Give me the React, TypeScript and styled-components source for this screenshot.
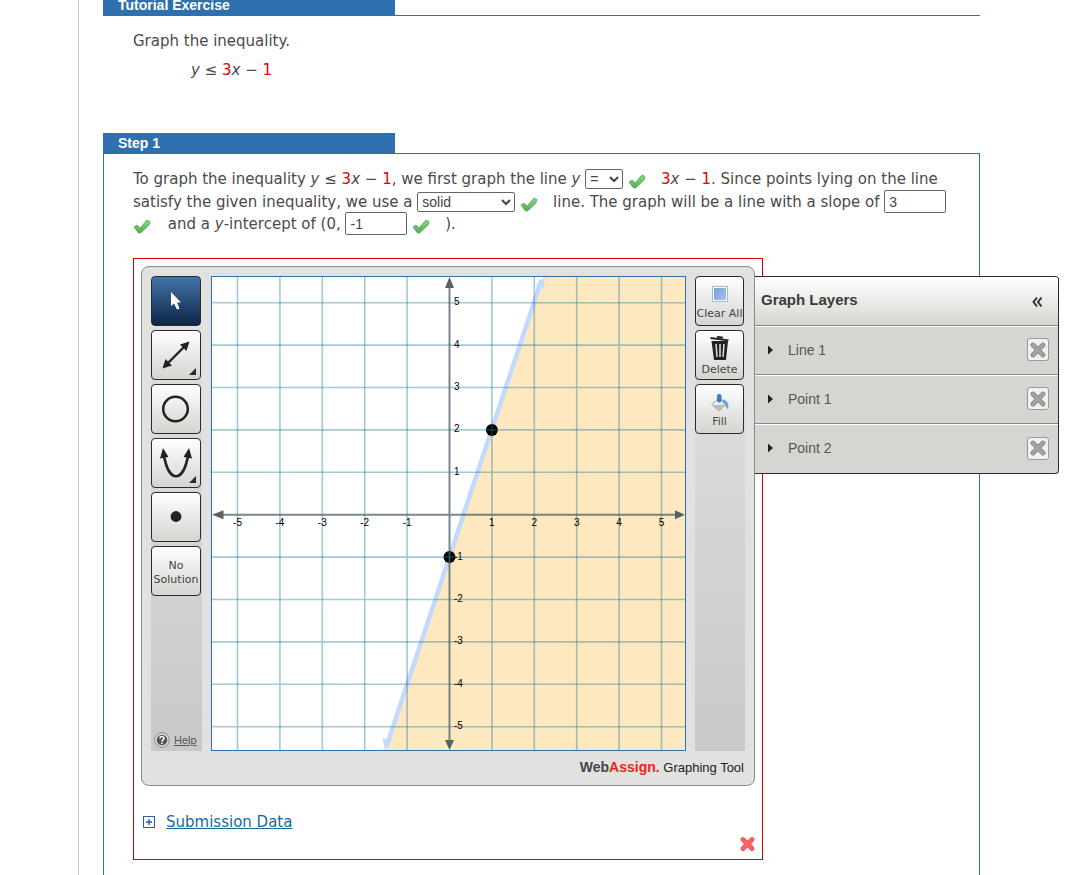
import React from "react";
import styled, { createGlobalStyle } from "styled-components";

const BLUE = "#2e6fad";

const GlobalStyle = createGlobalStyle`
  * { box-sizing: border-box; }
  body {
    margin: 0;
    background: #fff;
    color: #4a4a4a;
    font-family: "DejaVu Sans", Verdana, sans-serif;
    font-size: 15px;
    line-height: 22px;
    overflow-x: hidden;
  }
  p { margin: 0; }
`;

const Page = styled.main`
  display: flex;
  flex-direction: column;
  min-height: 100vh;
  margin-left: 78px;
  padding: 0 103px 0 24px;
  border-left: 1px solid #ccc;
`;

const Section = styled.section<{ $pull?: boolean; $grow?: boolean }>`
  margin-top: ${(p) => (p.$pull ? "-5px" : "0")};
  display: flex;
  flex-direction: column;
  flex-grow: ${(p) => (p.$grow ? 1 : 0)};
`;

const Tab = styled.h2`
  margin: 0;
  width: 33.33%;
  height: 20px;
  padding-left: 15px;
  background: ${BLUE};
  color: #fff;
  font: bold 14px/20px "Liberation Sans", Arial, sans-serif;
`;

const Prompt = styled.div`
  border-top: 1px solid ${BLUE};
  padding: 14px 30px 52px;
`;

const Formula = styled.p`
  margin-top: 7px;
  padding-left: 58px;
`;

const StepBody = styled.div`
  flex-grow: 1;
  border: 1px solid ${BLUE};
  border-width: 1px 1px 0;
  padding: 14px 29px 0;
`;

const Red = styled.span`
  color: #e00000;
`;

const Sentence = styled.p`
  white-space: nowrap;
  height: 22px;
`;

const Choice = styled.select<{ $width: number }>`
  width: ${(p) => p.$width}px;
  height: 20px;
  margin: 0 2px 2px 0;
  border: 1px solid #666;
  border-radius: 2px;
  background: #fff;
  color: #444;
  vertical-align: middle;
  font: 14px "Liberation Sans", Arial, sans-serif;
`;

const Answer = styled.input`
  width: 62px;
  height: 23px;
  margin: 0 2px 2px 0;
  padding: 0 4px;
  border: 1px solid #666;
  border-radius: 2px;
  color: #444;
  vertical-align: middle;
  font: 14px "Liberation Sans", Arial, sans-serif;
`;

const CheckIcon = styled.svg<{ $leading?: boolean }>`
  width: 18px;
  height: 16px;
  margin: 2px ${(p) => (p.$leading ? 12 : 10)}px 0 ${(p) => (p.$leading ? 0 : 3)}px;
  vertical-align: middle;
`;

const Check = ({ leading }: { leading?: boolean }) => (
  <CheckIcon $leading={leading} viewBox="0 0 18 16" role="img" aria-label="Correct">
    <defs>
      <linearGradient id="leaf" x1="0" y1="0" x2="0" y2="1">
        <stop offset="0" stopColor="#8fd78b" />
        <stop offset="1" stopColor="#4fae4d" />
      </linearGradient>
    </defs>
    <path d="M1 9 L4 7 L7 10 L14 2 L17 3.500 L16 7 L7.500 15 L5.500 15 Z" fill="url(#leaf)" stroke="#55a653" strokeWidth="0.800" strokeLinejoin="round" />
  </CheckIcon>
);

const ResultBox = styled.div`
  width: fit-content;
  margin-top: 24px;
  padding: 7px 7px 5px;
  border: 1px solid #d60000;
`;

const Tool = styled.div`
  position: relative;
  padding: 9px 9px 0;
  border: 1px solid #8a8a8a;
  border-radius: 8px;
  background: #e1e1df;
  font-family: "Liberation Sans", Arial, sans-serif;
`;

const Workspace = styled.div`
  display: flex;
  gap: 9px;
`;

const Strip = styled.div<{ $width: number }>`
  display: flex;
  flex-direction: column;
  gap: 4px;
  width: ${(p) => p.$width}px;
  padding-right: 1px;
  background: linear-gradient(#e2e2e2, #c9c9c9);
`;

const ToolButton = styled.button<{ $active?: boolean; $labelled?: boolean }>`
  position: relative;
  display: flex;
  flex-direction: column;
  align-items: center;
  justify-content: center;
  width: 100%;
  height: 50px;
  padding: ${(p) => (p.$labelled ? "3px 0 0" : "0")};
  border: 1px solid #2b2b2b;
  border-radius: 4px;
  background: ${(p) => (p.$active ? "linear-gradient(#4474ab, #0d2545)" : "linear-gradient(#fff, #d3d5d0)")};
  color: #444;
  font: 11px/14px "DejaVu Sans", Verdana, sans-serif;
`;

const Glyph = styled.svg`
  display: block;
  flex: none;
`;

const HelpLink = styled.a`
  display: flex;
  align-items: center;
  gap: 4px;
  margin-top: auto;
  padding: 0 0 3px 3px;
  color: #555;
  font-size: 11px;
  line-height: 16px;
`;

const Graph = styled.svg`
  display: block;
  width: 475px;
  height: 475px;
  border: 1px solid ${BLUE};
  background: #fff;
  font: 10px "Liberation Sans", Arial, sans-serif;
`;

const Brand = styled.div`
  padding: 5px 1px 6px;
  text-align: right;
  color: #222;
  font-size: 13px;
  line-height: 22px;
`;

const Web = styled.b`
  color: #3c4650;
  font-size: 14px;
`;

const Assign = styled.b`
  color: #fb1c1c;
  font-size: 14px;
`;

const Layers = styled.aside`
  position: absolute;
  left: calc(100% + 1px);
  top: 9px;
  width: 304px;
  border: 1px solid #2b2b2b;
  border-left: 0;
  border-radius: 0 4px 4px 0;
  background: #d5d6d1;
  overflow: hidden;
`;

const LayerRow = styled.div`
  display: flex;
  align-items: center;
  height: 49px;
  padding: 0 9px 2px 13px;
  border-top: 1px solid #fff;
  border-bottom: 1px solid #888;
  font-size: 14px;
  color: #555;
  &:last-child { border-bottom: 0; }
`;

const LayersHeader = styled(LayerRow)`
  padding: 0 15px 4px 6px;
  justify-content: space-between;
  background: linear-gradient(#fff, #d5d6d1);
  font-size: 15px;
  font-weight: bold;
  color: #3a3a3a;
`;

const LayerName = styled.span`
  flex: 1;
  margin-left: 15px;
`;

const PlainButton = styled.button`
  display: flex;
  padding: 4px 0 0;
  border: 0;
  background: none;
`;

const RemoveButton = styled.button`
  display: flex;
  align-items: center;
  justify-content: center;
  width: 22px;
  height: 23px;
  padding: 0;
  border: 1px solid #999;
  border-radius: 3px;
  background: #f1f1f1;
`;

const Submission = styled.div`
  display: flex;
  align-items: center;
  gap: 11px;
  margin-top: 25px;
  padding-left: 2px;
`;

const SubmissionLink = styled.a`
  color: #156a9f;
`;

const Verdict = styled.div`
  display: flex;
  justify-content: flex-end;
`;

const UNIT = 42.4;
const MID = 237.5;
const TICKS = [-5, -4, -3, -2, -1, 1, 2, 3, 4, 5];
const px = (x: number) => MID + x * UNIT;
const py = (y: number) => MID + 0.2 - y * UNIT;

const Plot = () => (
  <Graph viewBox="0 0 473 473" role="img" aria-label="Graph of the inequality">
    <path d={`M${px(2.21)} 0 H473 V473 H${px(-1.51)} Z`} fill="#fee8bf" />
    <path d={`M${px(2.17)} 3 L${px(-1.49)} 470`} stroke="#c3d9ff" strokeWidth="4.500" />
    <path d="M333 0 L331.500 12 L323 9 Z M173 473 L170.500 461 L179.500 464 Z" fill="#c3d9ff" />
    <circle cx={px(1)} cy={py(2)} r="6" fill="#000" />
    <circle cx={px(0)} cy={py(-1)} r="6" fill="#000" />
    <g stroke="#1c7896" strokeOpacity="0.400" strokeWidth="1.600">
      {TICKS.map((t) => (
        <path key={t} d={`M${px(t)} 0 V473 M0 ${py(t)} H473`} />
      ))}
    </g>
    <g stroke="#4a6068" strokeOpacity="0.750" strokeWidth="2">
      <path d={`M${MID} 6 V466 M6 ${py(0)} H466`} />
    </g>
    <path
      d={`M${MID} 0 l4.500 11 h-9 Z M${MID} 473 l4.500 -10 h-9 Z M0 ${py(0)} l11.500 -4.500 v9 Z M473 ${py(0)} l-10 -4.500 v9 Z`}
      fill="#566268"
    />
    <g fill="#000">
      {TICKS.map((t) => (
        <React.Fragment key={t}>
          <text x={px(t)} y="249" textAnchor="middle">{t}</text>
          <text x="242" y={py(t) + 2.4}>{t}</text>
        </React.Fragment>
      ))}
    </g>
  </Graph>
);

const Corner = styled.svg`
  position: absolute;
  right: 4px;
  bottom: 4px;
`;

const MenuCorner = () => (
  <Corner width="7" height="7" viewBox="0 0 7 7"><path d="M7 0 V7 H0 Z" fill="#2b2b2b" /></Corner>
);

const RemoveIcon = () => (
  <Glyph width="16" height="16" viewBox="0 0 16 16">
    <path d="M3 3 L13 13 M13 3 L3 13" stroke="#858585" strokeWidth="4.800" strokeLinecap="round" />
    <path d="M3 3 L13 13 M13 3 L3 13" stroke="#a2a2a2" strokeWidth="3.400" strokeLinecap="round" />
  </Glyph>
);

export default function App() {
  return (
    <>
      <GlobalStyle />
      <Page>
        <Section $pull>
          <Tab>Tutorial Exercise</Tab>
          <Prompt>
            <p>Graph the inequality.</p>
            <Formula>
              <i>y</i> ≤ <Red>3</Red><i>x</i> − <Red>1</Red>
            </Formula>
          </Prompt>
        </Section>

        <Section $grow>
          <Tab>Step 1</Tab>
          <StepBody>
            <Sentence>
              To graph the inequality <i>y</i> ≤ <Red>3</Red><i>x</i> − <Red>1</Red>, we first graph the line <i>y</i>{" "}
              <Choice $width={38} aria-label="Relation"><option>=</option></Choice>
              <Check />{" "}
              <Red>3</Red><i>x</i> − <Red>1</Red>. Since points lying on the line
            </Sentence>
            <Sentence>
              satisfy the given inequality, we use a{" "}
              <Choice $width={98} aria-label="Line style"><option>solid</option></Choice>
              <Check />{" "}
              line. The graph will be a line with a slope of{" "}
              <Answer aria-label="Slope" defaultValue="3" />
            </Sentence>
            <Sentence>
              <Check leading />{" "}
              and a <i>y</i>-intercept of (0,{" "}
              <Answer aria-label="y-intercept" defaultValue="-1" />
              <Check />{" "}
              ).
            </Sentence>

            <ResultBox>
              <Tool>
                <Workspace>
                  <Strip $width={51}>
                    <ToolButton $active aria-label="Select">
                      <Glyph width="12" height="18" viewBox="0 0 12 18">
                        <path d="M1 0 V14 L4 11.500 L7 17.500 L9.500 16.500 L7 10.500 H11 Z" fill="#fff" />
                      </Glyph>
                    </ToolButton>
                    <ToolButton aria-label="Line">
                      <Glyph width="30" height="30" viewBox="0 0 30 30">
                        <path d="M6 24 L24 6" stroke="#222" strokeWidth="2.400" />
                        <path d="M28.500 1.500 L25.500 11 L19 4.500 Z M1.500 28.500 L4.500 19 L11 25.500 Z" fill="#222" />
                      </Glyph>
                      <MenuCorner />
                    </ToolButton>
                    <ToolButton aria-label="Circle">
                      <Glyph width="28" height="28" viewBox="0 0 28 28">
                        <circle cx="13.500" cy="14" r="12.300" fill="none" stroke="#222" strokeWidth="2.500" />
                      </Glyph>
                    </ToolButton>
                    <ToolButton aria-label="Parabola">
                      <Glyph width="32" height="30" viewBox="0 0 32 30">
                        <path d="M4 8 C9 35 23 35 28 8" fill="none" stroke="#222" strokeWidth="2.600" />
                        <path d="M3 0 L8.500 9 L0 10.500 Z M29 0 L32 10.500 L23.500 9 Z" fill="#222" />
                      </Glyph>
                      <MenuCorner />
                    </ToolButton>
                    <ToolButton aria-label="Point">
                      <Glyph width="12" height="12" viewBox="0 0 12 12"><circle cx="6" cy="5.500" r="5.400" fill="#222" /></Glyph>
                    </ToolButton>
                    <ToolButton $labelled>No<br />Solution</ToolButton>
                    <HelpLink href="#help">
                      <Glyph width="16" height="16" viewBox="0 0 16 16">
                        <circle cx="8" cy="8" r="7.300" fill="#ddd" stroke="#888" strokeWidth="1" />
                        <circle cx="8" cy="8" r="5.300" fill="#555" />
                        <path d="M6 6.500 C6 4 10 4 10 6.300 C10 7.800 8 7.800 8 9.400 M8 10.500 V12" fill="none" stroke="#fff" strokeWidth="1.500" />
                      </Glyph>
                      Help
                    </HelpLink>
                  </Strip>
                  <Plot />
                  <Strip $width={50}>
                    <ToolButton $labelled>
                      <Glyph width="18" height="22" viewBox="0 0 18 22">
                        <defs>
                          <linearGradient id="pane" x1="0" y1="0" x2="1" y2="1">
                            <stop offset="0" stopColor="#7f9fdc" />
                            <stop offset="1" stopColor="#a5c0f0" />
                          </linearGradient>
                        </defs>
                        <rect x="1.500" y="1.500" width="15" height="15" fill="#fff" stroke="#9db8e6" />
                        <rect x="3" y="3" width="12" height="12" fill="url(#pane)" />
                      </Glyph>
                      Clear All
                    </ToolButton>
                    <ToolButton $labelled>
                      <Glyph width="20" height="27" viewBox="0 0 20 27">
                        <path d="M0.500 2 L18.500 4.300 M7 0.800 L13 1.600" stroke="#222" strokeWidth="1.800" fill="none" />
                        <path d="M1.500 5 H18 L16 24 H4 Z" fill="#222" />
                        <path d="M6 8 L7 21 M10 8 V21 M14 8 L13 21" stroke="#ddd" strokeWidth="1.500" />
                      </Glyph>
                      Delete
                    </ToolButton>
                    <ToolButton $labelled>
                      <Glyph width="20" height="22" viewBox="0 0 20 22">
                        <path d="M9 4.500 L16 11.500 L9 18 L2 11.500 Z" fill="#f0f0f0" stroke="#999" />
                        <path d="M3 12 L16 11.500 L9 18 Z" fill="#bdbdbd" />
                        <path d="M12.500 6.500 C17 7 19.500 11 18 16 C15.500 15 17 12 12.500 9.500 Z" fill="#69a2d8" />
                        <rect x="7" y="1" width="4.500" height="8.500" rx="2" fill="#3b7cc4" />
                      </Glyph>
                      Fill
                    </ToolButton>
                  </Strip>
                </Workspace>
                <Brand><Web>Web</Web><Assign>Assign.</Assign> Graphing Tool</Brand>
                <Layers>
                  <LayersHeader>
                    Graph Layers
                    <PlainButton aria-label="Collapse">
                      <Glyph width="12" height="12" viewBox="0 0 12 12">
                        <path d="M6 1.500 L2.500 6 L6 10.500 M10.500 1.500 L7 6 L10.500 10.500" fill="none" stroke="#333" strokeWidth="2" />
                      </Glyph>
                    </PlainButton>
                  </LayersHeader>
                  {["Line 1", "Point 1", "Point 2"].map((name) => (
                    <LayerRow key={name}>
                      <Glyph width="5" height="10" viewBox="0 0 5 10"><path d="M0 0.500 L5 5 L0 9.500 Z" fill="#222" /></Glyph>
                      <LayerName>{name}</LayerName>
                      <RemoveButton aria-label={`Remove ${name}`}>
                        <RemoveIcon />
                      </RemoveButton>
                    </LayerRow>
                  ))}
                </Layers>
              </Tool>
              <Submission>
                <Glyph width="12" height="12" viewBox="0 0 12 12">
                  <rect x="0.500" y="0.500" width="11" height="11" fill="#fff" stroke="#2b5f9e" />
                  <path d="M3 6 H9 M6 3 V9" stroke="#2b5f9e" strokeWidth="1.400" />
                </Glyph>
                <SubmissionLink href="#submission">Submission Data</SubmissionLink>
              </Submission>
              <Verdict>
                <Glyph width="16" height="21" viewBox="0 0 16 21" role="img" aria-label="Incorrect">
                  <path d="M4 6.500 L13 15.500 M13 6.500 L4 15.500" stroke="#ee4f4f" strokeWidth="4.800" strokeLinecap="round" />
                  <path d="M4 6.500 L13 15.500 M13 6.500 L4 15.500" stroke="#f86464" strokeWidth="3.200" strokeLinecap="round" />
                </Glyph>
              </Verdict>
            </ResultBox>
          </StepBody>
        </Section>
      </Page>
    </>
  );
}
